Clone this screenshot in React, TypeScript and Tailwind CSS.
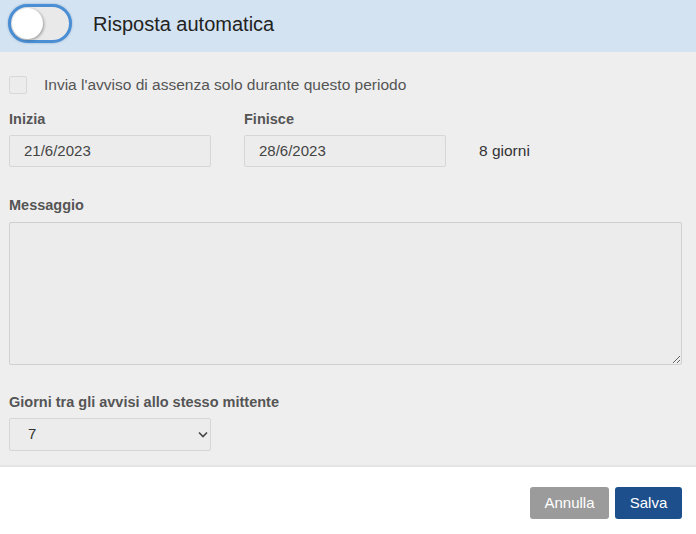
import React, { useState } from "react";

function Toggle({ on, onChange }: { on: boolean; onChange: (v: boolean) => void }) {
  return (
    <button
      type="button"
      onClick={() => onChange(!on)}
      className="relative h-[39px] w-[64px] rounded-full border-[3px] border-[#4a8fd4] bg-[#e9e9e9] shadow-[0_0_2px_rgba(40,100,170,0.5)]"
    >
      <span
        className={
          "absolute top-[1px] h-[31px] w-[31px] rounded-full bg-white shadow-[1px_1px_3px_rgba(0,0,0,0.35)] " +
          (on ? "left-[27px]" : "left-[1px]")
        }
      />
    </button>
  );
}

export default function App() {
  const [enabled, setEnabled] = useState(false);
  const [onlyPeriod, setOnlyPeriod] = useState(false);

  return (
    <div
      className="w-[696px] h-[534px] flex flex-col bg-white text-[15px] text-[#333]"
      style={{ fontFamily: '"Liberation Sans", Arial, sans-serif' }}
    >
      {/* header */}
      <div className="h-[52px] flex items-center bg-[#d3e3f1] pl-[8px] pb-[5px]">
        <Toggle on={enabled} onChange={setEnabled} />
        <span className="ml-[21px] text-[20px] text-[#222] leading-none">Risposta automatica</span>
      </div>

      {/* form body */}
      <div className="h-[415px] bg-[#eeeeee] px-[9px] pt-[24px] border-b-[2px] border-[#e4e4e4]">
        <label className="flex items-center h-[18px] text-[#555]">
          <input
            type="checkbox"
            checked={onlyPeriod}
            onChange={(e) => setOnlyPeriod(e.target.checked)}
            className="appearance-none w-[18px] h-[18px] rounded-[2px] border border-[#d8d8d8] bg-[#ececec]"
          />
          <span className="ml-[17px] text-[15.5px]">Invia l'avviso di assenza solo durante questo periodo</span>
        </label>

        <div className="flex items-end mt-[17px]">
          <div className="w-[202px]">
            <div className="h-[17px] leading-[17px] font-bold text-[14.5px] text-[#555]">Inizia</div>
            <div className="mt-[7px] h-[32px] rounded-[2px] border border-[#d6d6d6] bg-[#ececec] flex items-center pl-[14px] text-[#444]">
              21/6/2023
            </div>
          </div>
          <div className="w-[202px] ml-[33px]">
            <div className="h-[17px] leading-[17px] font-bold text-[14.5px] text-[#555]">Finisce</div>
            <div className="mt-[7px] h-[32px] rounded-[2px] border border-[#d6d6d6] bg-[#ececec] flex items-center pl-[14px] text-[#444]">
              28/6/2023
            </div>
          </div>
          <div className="ml-[33px] h-[32px] flex items-center text-[15.5px] text-[#333]">8 giorni</div>
        </div>

        <div className="mt-[30px] h-[17px] leading-[17px] font-bold text-[14.5px] text-[#555]">Messaggio</div>
        <textarea className="block mt-[8px] w-[673px] h-[143px] rounded-[2px] border border-[#d0d0d0] bg-[#ececec] outline-none" />

        <div className="mt-[29px] h-[17px] leading-[17px] font-bold text-[14.5px] text-[#555]">
          Giorni tra gli avvisi allo stesso mittente
        </div>
        <div className="relative mt-[7px] w-[202px] h-[33px]">
          <select
            defaultValue="7"
            className="appearance-none w-full h-full rounded-[2px] border border-[#d6d6d6] bg-[#ececec] pl-[18px] text-[15px] text-[#333] outline-none"
          >
            {[1, 2, 3, 4, 5, 6, 7, 14, 30].map((n) => (
              <option key={n} value={String(n)}>
                {n}
              </option>
            ))}
          </select>
          <svg
            className="pointer-events-none absolute right-[3px] top-[13px]"
            width="10"
            height="7"
            viewBox="0 0 10 7"
            fill="none"
          >
            <path d="M1 1.5 L5 5.5 L9 1.5" stroke="#444" strokeWidth="1.6" />
          </svg>
        </div>
      </div>

      {/* footer */}
      <div className="flex-1 flex items-start justify-end pr-[14px] pt-[20px]">
        <button className="h-[32px] w-[79px] rounded-[3px] bg-[#9b9b9b] text-white text-[15px]">Annulla</button>
        <button className="ml-[6px] h-[32px] w-[67px] rounded-[3px] bg-[#1c4f8c] text-white text-[15px]">Salva</button>
      </div>
    </div>
  );
}
